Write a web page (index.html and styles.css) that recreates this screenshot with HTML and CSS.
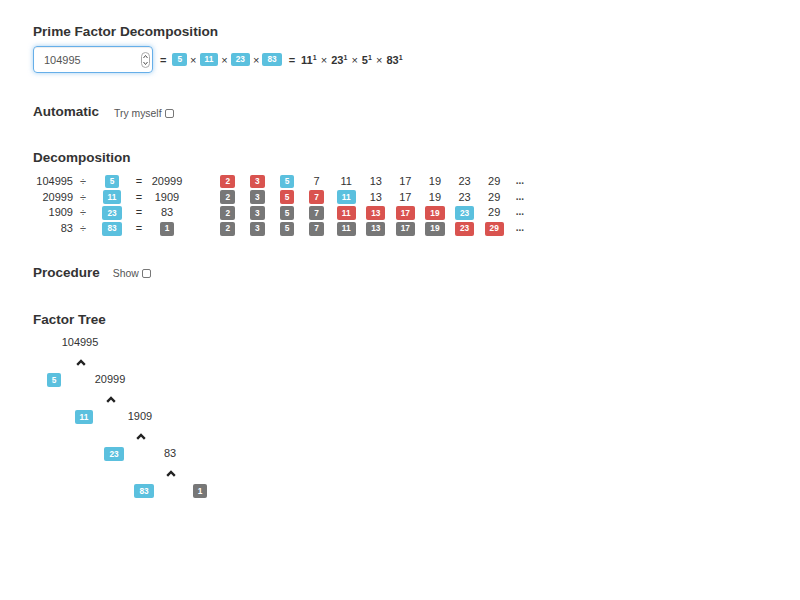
FILE: index.html
```html
<!DOCTYPE html>
<html>
<head>
<meta charset="utf-8">
<link rel="stylesheet" href="styles.css">
</head>
<body>
<div class="page">
  <h2 class="title">Prime Factor Decomposition</h2>
  <div class="input-row">
    <div class="num-input">
      <span class="num-value">104995</span>
      <svg class="spin" width="9" height="16" viewBox="0 0 9 16"><rect x="0.5" y="0.5" width="8" height="15" rx="4" fill="#fff" stroke="#aaa"/><path d="M2.5 6 L4.5 3.5 L6.5 6" fill="none" stroke="#555" stroke-width="1"/><path d="M2.5 10 L4.5 12.5 L6.5 10" fill="none" stroke="#555" stroke-width="1"/></svg>
    </div>
    <span class="eq">=</span>
    <span class="lbl info">5</span><span class="x">×</span>
    <span class="lbl info">11</span><span class="x">×</span>
    <span class="lbl info">23</span><span class="x">×</span>
    <span class="lbl info">83</span>
    <span class="eq">=</span>
    <span class="result">11<sup>1</sup> <span class="rx">×</span> 23<sup>1</sup> <span class="rx">×</span> 5<sup>1</sup> <span class="rx">×</span> 83<sup>1</sup></span>
  </div>

  <div class="section-head head-auto">
    <h3>Automatic</h3>
    <label class="opt">Try myself <span class="cb"></span></label>
  </div>

  <h3 class="head-decomp">Decomposition</h3>
  <div class="decomp">
    <span class="c-n">104995</span><span class="c-d">÷</span><span class="c-b"><span class="lbl info">5</span></span><span class="c-e">=</span><span class="c-r">20999</span><span class="c-sp"></span>
    <span class="p"><span class="lbl danger">2</span></span><span class="p"><span class="lbl danger">3</span></span><span class="p"><span class="lbl info">5</span></span><span class="p">7</span><span class="p">11</span><span class="p">13</span><span class="p">17</span><span class="p">19</span><span class="p">23</span><span class="p">29</span><span class="dots">...</span>

    <span class="c-n">20999</span><span class="c-d">÷</span><span class="c-b"><span class="lbl info">11</span></span><span class="c-e">=</span><span class="c-r">1909</span><span class="c-sp"></span>
    <span class="p"><span class="lbl def">2</span></span><span class="p"><span class="lbl def">3</span></span><span class="p"><span class="lbl danger">5</span></span><span class="p"><span class="lbl danger">7</span></span><span class="p"><span class="lbl info">11</span></span><span class="p">13</span><span class="p">17</span><span class="p">19</span><span class="p">23</span><span class="p">29</span><span class="dots">...</span>

    <span class="c-n">1909</span><span class="c-d">÷</span><span class="c-b"><span class="lbl info">23</span></span><span class="c-e">=</span><span class="c-r">83</span><span class="c-sp"></span>
    <span class="p"><span class="lbl def">2</span></span><span class="p"><span class="lbl def">3</span></span><span class="p"><span class="lbl def">5</span></span><span class="p"><span class="lbl def">7</span></span><span class="p"><span class="lbl danger">11</span></span><span class="p"><span class="lbl danger">13</span></span><span class="p"><span class="lbl danger">17</span></span><span class="p"><span class="lbl danger">19</span></span><span class="p"><span class="lbl info">23</span></span><span class="p">29</span><span class="dots">...</span>

    <span class="c-n">83</span><span class="c-d">÷</span><span class="c-b"><span class="lbl info">83</span></span><span class="c-e">=</span><span class="c-r"><span class="lbl def">1</span></span><span class="c-sp"></span>
    <span class="p"><span class="lbl def">2</span></span><span class="p"><span class="lbl def">3</span></span><span class="p"><span class="lbl def">5</span></span><span class="p"><span class="lbl def">7</span></span><span class="p"><span class="lbl def">11</span></span><span class="p"><span class="lbl def">13</span></span><span class="p"><span class="lbl def">17</span></span><span class="p"><span class="lbl def">19</span></span><span class="p"><span class="lbl danger">23</span></span><span class="p"><span class="lbl danger">29</span></span><span class="dots">...</span>
  </div>

  <div class="section-head head-proc">
    <h3>Procedure</h3>
    <label class="opt">Show <span class="cb"></span></label>
  </div>

  <h3 class="head-tree">Factor Tree</h3>
  <div class="tree">
    <div class="root">104995</div>
    <div class="branch">
      <div class="chev"><svg width="10" height="7" viewBox="0 0 10 7"><path d="M1.2 5.8 L5 2 L8.8 5.8" fill="none" stroke="#222" stroke-width="2.4"/></svg></div>
      <div class="pair"><span class="leaf"><span class="lbl info">5</span></span><span class="val">20999</span></div>
      <div class="branch">
        <div class="chev"><svg width="10" height="7" viewBox="0 0 10 7"><path d="M1.2 5.8 L5 2 L8.8 5.8" fill="none" stroke="#222" stroke-width="2.4"/></svg></div>
        <div class="pair"><span class="leaf"><span class="lbl info">11</span></span><span class="val">1909</span></div>
        <div class="branch">
          <div class="chev"><svg width="10" height="7" viewBox="0 0 10 7"><path d="M1.2 5.8 L5 2 L8.8 5.8" fill="none" stroke="#222" stroke-width="2.4"/></svg></div>
          <div class="pair"><span class="leaf"><span class="lbl info">23</span></span><span class="val">83</span></div>
          <div class="branch">
            <div class="chev"><svg width="10" height="7" viewBox="0 0 10 7"><path d="M1.2 5.8 L5 2 L8.8 5.8" fill="none" stroke="#222" stroke-width="2.4"/></svg></div>
            <div class="pair"><span class="leaf"><span class="lbl info">83</span></span><span class="val"><span class="lbl def">1</span></span></div>
          </div>
        </div>
      </div>
    </div>
  </div>
</div>
</body>
</html>
```

FILE: styles.css
```css
* { box-sizing: border-box; }
html, body { margin: 0; padding: 0; background: #fff; }
body {
  font-family: "Liberation Sans", Arial, sans-serif;
  font-size: 11px;
  color: #333;
}
.page { padding: 22px 0 0 33px; }

h2, h3 { margin: 0; font-weight: bold; color: #333; line-height: 20px; }
h2.title { font-size: 13.6px; }
h3 { font-size: 13.5px; }

.input-row {
  margin-top: 4px;
  display: flex;
  align-items: center;
  height: 27px;
}
.num-input {
  width: 120px;
  height: 27px;
  border: 1px solid #66afe9;
  border-radius: 4px;
  box-shadow: inset 0 1px 1px rgba(0,0,0,.075), 0 0 5px rgba(102,175,233,.6);
  display: flex;
  align-items: center;
  justify-content: space-between;
  padding: 0 2px 0 10px;
  color: #555;
  font-size: 11px;
}
.spin { display: block; }

.eq { font-weight: bold; margin: 0 6px 0 7px; }
.x { margin: 0 3px; font-size: 11px; }
.result { font-weight: bold; }
.result .rx { font-weight: normal; font-size: 11px; margin: 0 1px; }
.result sup { font-size: 7px; vertical-align: 4px; line-height: 0; }

.lbl {
  display: inline-block;
  font-size: 8.3px;
  font-weight: bold;
  color: #fff;
  line-height: 1;
  padding: 2.5px 5px 3px;
  border-radius: 2px;
  text-align: center;
}
.info { background: #5bc0de; }
.danger { background: #d9534f; }
.def { background: #777; }

.section-head { display: flex; align-items: center; }
.head-auto { margin-top: 29px; }
.head-proc { margin-top: 27px; }
.opt { font-size: 10.4px; color: #555; display: flex; align-items: center; margin-left: 15px; margin-top: 2px; }
.head-proc .opt { margin-left: 13px; }
.cb {
  display: inline-block;
  width: 9px; height: 9px;
  border: 1px solid #777;
  border-radius: 2px;
  margin-left: 3px;
  background: #fff;
}

.head-decomp { margin-top: 26px; }
.decomp {
  margin-top: 5px;
  display: grid;
  grid-template-columns: 40px 20px 38px 16px 40px 26px repeat(10, 29.6px) 22px;
  grid-auto-rows: 15.7px;
  align-items: center;
}
.decomp > span { text-align: center; line-height: 14px; }
.decomp .c-n { text-align: right; }
.decomp .c-d { color: #555; }
.dots { font-size: 10px; font-weight: bold; color: #444; }

.head-tree { margin-top: 27px; }
.tree { margin-top: 3px; }
.root { margin-left: 18px; width: 58px; text-align: center; height: 18px; line-height: 18px; }
.tree > .branch { margin-left: -6px; }
.branch .branch { margin-left: 30px; }
.chev { height: 19px; padding-left: 49px; padding-top: 8px; }
.chev svg { display: block; }
.pair { display: grid; grid-template-columns: 54px 58px; height: 18px; align-items: center; }
.pair > span { text-align: center; line-height: 18px; }
```
